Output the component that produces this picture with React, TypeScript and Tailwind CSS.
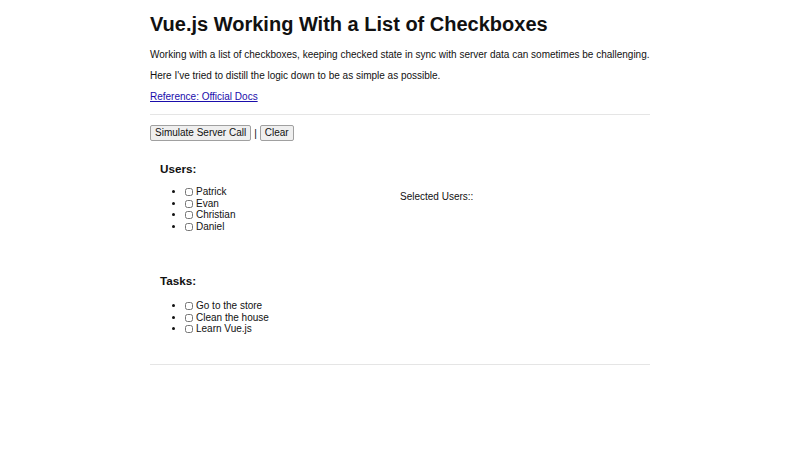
import { useState } from 'react';

const USERS = ['Patrick', 'Evan', 'Christian', 'Daniel'];
const TASKS = ['Go to the store', 'Clean the house', 'Learn Vue.js'];

function CheckList({ items, checked, onToggle }: { items: string[]; checked: string[]; onToggle: (v: string) => void }) {
  return (
    <ul className="list-disc pl-[25px] text-[10px] leading-[11.5px]">
      {items.map((item) => (
        <li key={item} className="h-[11.5px]">
          <label>
            <input
              type="checkbox"
              className="w-[8px] h-[8px] mr-[3px] align-[-1px]"
              checked={checked.includes(item)}
              onChange={() => onToggle(item)}
            />
            {item}
          </label>
        </li>
      ))}
    </ul>
  );
}

export default function App() {
  const [users, setUsers] = useState<string[]>([]);
  const [tasks, setTasks] = useState<string[]>([]);

  const toggle = (list: string[], set: (v: string[]) => void) => (v: string) =>
    set(list.includes(v) ? list.filter((x) => x !== v) : [...list, v]);

  return (
    <div className="min-h-screen bg-white text-[#111] font-['Liberation_Sans',Arial,sans-serif]">
      <div className="w-[500px] mx-auto pt-[11px]">
        <h1 className="text-[20px] font-bold leading-[26px] mb-[12px]">Vue.js Working With a List of Checkboxes</h1>
        <p className="text-[10px] leading-[12px] mb-[9px]">
          Working with a list of checkboxes, keeping checked state in sync with server data can sometimes be challenging.
        </p>
        <p className="text-[10px] leading-[12px] mb-[9px]">Here I've tried to distill the logic down to be as simple as possible.</p>
        <p className="text-[10px] leading-[12px]">
          <a href="#" className="text-[#1a0dab] underline">
            Reference: Official Docs
          </a>
        </p>
        <hr className="border-t border-[#e5e5e5] mt-[11px] mb-[10px]" />
        <div className="flex items-center text-[10px]">
          <button
            onClick={() => setUsers(['Patrick', 'Daniel'])}
            className="h-[16px] px-[4px] bg-[#efefef] border border-[#a0a0a0] rounded-[2px] leading-none"
          >
            Simulate Server Call
          </button>
          <span className="mx-[3px]">|</span>
          <button
            onClick={() => {
              setUsers([]);
              setTasks([]);
            }}
            className="h-[16px] px-[4px] bg-[#efefef] border border-[#a0a0a0] rounded-[2px] leading-none"
          >
            Clear
          </button>
        </div>

        <div className="flex pl-[10px] pt-[21px]">
          <div className="w-[240px]">
            <h3 className="text-[11.7px] font-bold leading-[14px] mb-[10px]">Users:</h3>
            <CheckList items={USERS} checked={users} onToggle={toggle(users, setUsers)} />
          </div>
          <div className="pt-[29px] text-[10px] leading-[12px]">Selected Users::{users.join(', ')}</div>
        </div>

        <div className="pl-[10px] pt-[42px]">
          <h3 className="text-[11.7px] font-bold leading-[14px] mb-[12px]">Tasks:</h3>
          <CheckList items={TASKS} checked={tasks} onToggle={toggle(tasks, setTasks)} />
        </div>

        <hr className="border-t border-[#e5e5e5] mt-[29px]" />
      </div>
    </div>
  );
}
